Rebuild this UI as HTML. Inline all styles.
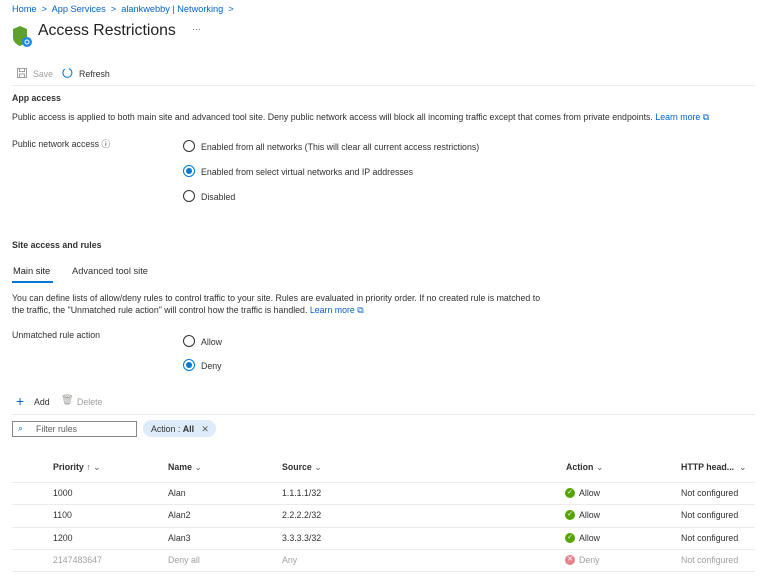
<!DOCTYPE html>
<html><head><style>
*{margin:0;padding:0;box-sizing:border-box}
body{width:768px;height:578px;overflow:hidden;background:#fff;font-family:"Liberation Sans",sans-serif;font-size:8.8px;color:#323130;position:relative}
.a{position:absolute;white-space:nowrap}
.link{color:#0064c8}
.b{font-weight:bold}
.radio{position:absolute;width:12px;height:12px;border:1px solid #323130;border-radius:50%}
.radio.on{border-color:#0078d4}
.radio.on::after{content:"";position:absolute;left:2px;top:2px;width:6px;height:6px;border-radius:50%;background:#0078d4}
.hl{position:absolute;left:12px;width:743px;height:1px;background:#edebe9}
.chk{position:absolute;left:-1px;top:0;width:10px;height:10px;border-radius:50%;background:#57a300;color:#fff;font-size:7px;text-align:center;line-height:10px}
.x{background:#e8838a}
.g{color:#a19f9d}
.act{padding-left:13px}
</style></head><body>
<div class="a link" style="left:12px;top:4px;font-size:9.2px">Home &nbsp;&gt;&nbsp; App Services &nbsp;&gt;&nbsp; alankwebby | Networking &nbsp;&gt;</div>
<svg class="a" style="left:12px;top:26px" width="20" height="22" viewBox="0 0 20 22"><path d="M1 3 L8 0 L15 3 L15 11 Q15 17 8 20 Q1 17 1 11 Z" fill="#5ea02e"/><circle cx="15" cy="16" r="5" fill="#1e88e5"/><circle cx="15" cy="16" r="2" fill="none" stroke="#fff" stroke-width="1"/></svg>
<div class="a" style="left:38px;top:22px;font-size:15.8px;color:#201f1e">Access Restrictions</div>
<div class="a" style="left:192px;top:24px;color:#605e5c">···</div>
<svg class="a" style="left:17px;top:68px" width="10" height="10"><rect x="0.5" y="0.5" width="9" height="9" fill="none" stroke="#a19f9d"/><rect x="2.5" y="0.5" width="5" height="3" fill="none" stroke="#a19f9d"/><rect x="2.5" y="6" width="5" height="3.5" fill="none" stroke="#a19f9d"/></svg>
<div class="a g" style="left:33px;top:69px">Save</div>
<svg class="a" style="left:62px;top:67px" width="12" height="12"><path d="M3 2 A4.5 4.5 0 1 0 7 1.6" fill="none" stroke="#0078d4" stroke-width="1"/></svg>
<div class="a" style="left:79px;top:69px">Refresh</div>
<div class="hl" style="top:85px"></div>
<div class="a b" style="left:12px;top:93px">App access</div>
<div class="a" style="left:12px;top:112px">Public access is applied to both main site and advanced tool site. Deny public network access will block all incoming traffic except that comes from private endpoints. <span class="link">Learn more ⧉</span></div>
<div class="a" style="left:12px;top:137px">Public network access ⓘ</div>
<div class="radio" style="left:183px;top:140px"></div><div class="a" style="left:201px;top:142px">Enabled from all networks (This will clear all current access restrictions)</div>
<div class="radio on" style="left:183px;top:165px"></div><div class="a" style="left:201px;top:167px">Enabled from select virtual networks and IP addresses</div>
<div class="radio" style="left:183px;top:190px"></div><div class="a" style="left:201px;top:192px">Disabled</div>
<div class="a b" style="left:12px;top:240px">Site access and rules</div>
<div class="a" style="left:13px;top:266px;font-size:9.3px;color:#201f1e">Main site</div>
<div class="a" style="left:12px;top:281px;width:41px;height:2px;background:#0078d4"></div>
<div class="a" style="left:72px;top:266px;font-size:9.3px">Advanced tool site</div>
<div class="a" style="left:12px;top:293px">You can define lists of allow/deny rules to control traffic to your site. Rules are evaluated in priority order. If no created rule is matched to</div>
<div class="a" style="left:12px;top:305px">the traffic, the "Unmatched rule action" will control how the traffic is handled. <span class="link">Learn more ⧉</span></div>
<div class="a" style="left:12px;top:330px">Unmatched rule action</div>
<div class="radio" style="left:183px;top:335px"></div><div class="a" style="left:201px;top:337px">Allow</div>
<div class="radio on" style="left:183px;top:359px"></div><div class="a" style="left:201px;top:361px">Deny</div>
<div class="a link" style="left:16px;top:393px;font-size:14px;font-weight:300">+</div>
<div class="a" style="left:34px;top:397px">Add</div>
<div class="a g" style="left:61px;top:395px;font-size:10px">🗑</div>
<div class="a g" style="left:77px;top:397px">Delete</div>
<div class="hl" style="top:414px"></div>
<div class="a" style="left:12px;top:421px;width:125px;height:16px;border:1px solid #8a8886"></div>
<div class="a link" style="left:18px;top:423px">⌕</div>
<div class="a" style="left:36px;top:424px;color:#605e5c">Filter rules</div>
<div class="a" style="left:143px;top:420px;width:73px;height:17px;border-radius:9px;background:#deecf9"></div>
<div class="a" style="left:151px;top:424px">Action : <b>All</b> &nbsp;&nbsp;<span style="color:#605e5c">✕</span></div>
<div class="a b" style="left:53px;top:462px">Priority <span style="font-weight:normal;color:#605e5c">↑ ⌄</span></div>
<div class="a b" style="left:168px;top:462px">Name <span style="font-weight:normal;color:#605e5c">⌄</span></div>
<div class="a b" style="left:282px;top:462px">Source <span style="font-weight:normal;color:#605e5c">⌄</span></div>
<div class="a b" style="left:566px;top:462px">Action <span style="font-weight:normal;color:#605e5c">⌄</span></div>
<div class="a b" style="left:681px;top:462px">HTTP head... <span style="font-weight:normal;color:#605e5c">&nbsp;⌄</span></div>
<div class="hl" style="top:482px"></div>
<div class="a" style="left:53px;top:488px">1000</div><div class="a" style="left:168px;top:488px">Alan</div><div class="a" style="left:282px;top:488px">1.1.1.1/32</div><div class="a act" style="left:566px;top:488px"><span class="chk">✓</span>Allow</div><div class="a" style="left:681px;top:488px">Not configured</div>
<div class="hl" style="top:504px"></div>
<div class="a" style="left:53px;top:510px">1100</div><div class="a" style="left:168px;top:510px">Alan2</div><div class="a" style="left:282px;top:510px">2.2.2.2/32</div><div class="a act" style="left:566px;top:510px"><span class="chk">✓</span>Allow</div><div class="a" style="left:681px;top:510px">Not configured</div>
<div class="hl" style="top:527px"></div>
<div class="a" style="left:53px;top:533px">1200</div><div class="a" style="left:168px;top:533px">Alan3</div><div class="a" style="left:282px;top:533px">3.3.3.3/32</div><div class="a act" style="left:566px;top:533px"><span class="chk">✓</span>Allow</div><div class="a" style="left:681px;top:533px">Not configured</div>
<div class="hl" style="top:549px"></div>
<div class="a g" style="left:53px;top:555px">2147483647</div><div class="a g" style="left:168px;top:555px">Deny all</div><div class="a g" style="left:282px;top:555px">Any</div><div class="a g act" style="left:566px;top:555px"><span class="chk x">✕</span>Deny</div><div class="a g" style="left:681px;top:555px">Not configured</div>
<div class="hl" style="top:571px"></div>
</body></html>
